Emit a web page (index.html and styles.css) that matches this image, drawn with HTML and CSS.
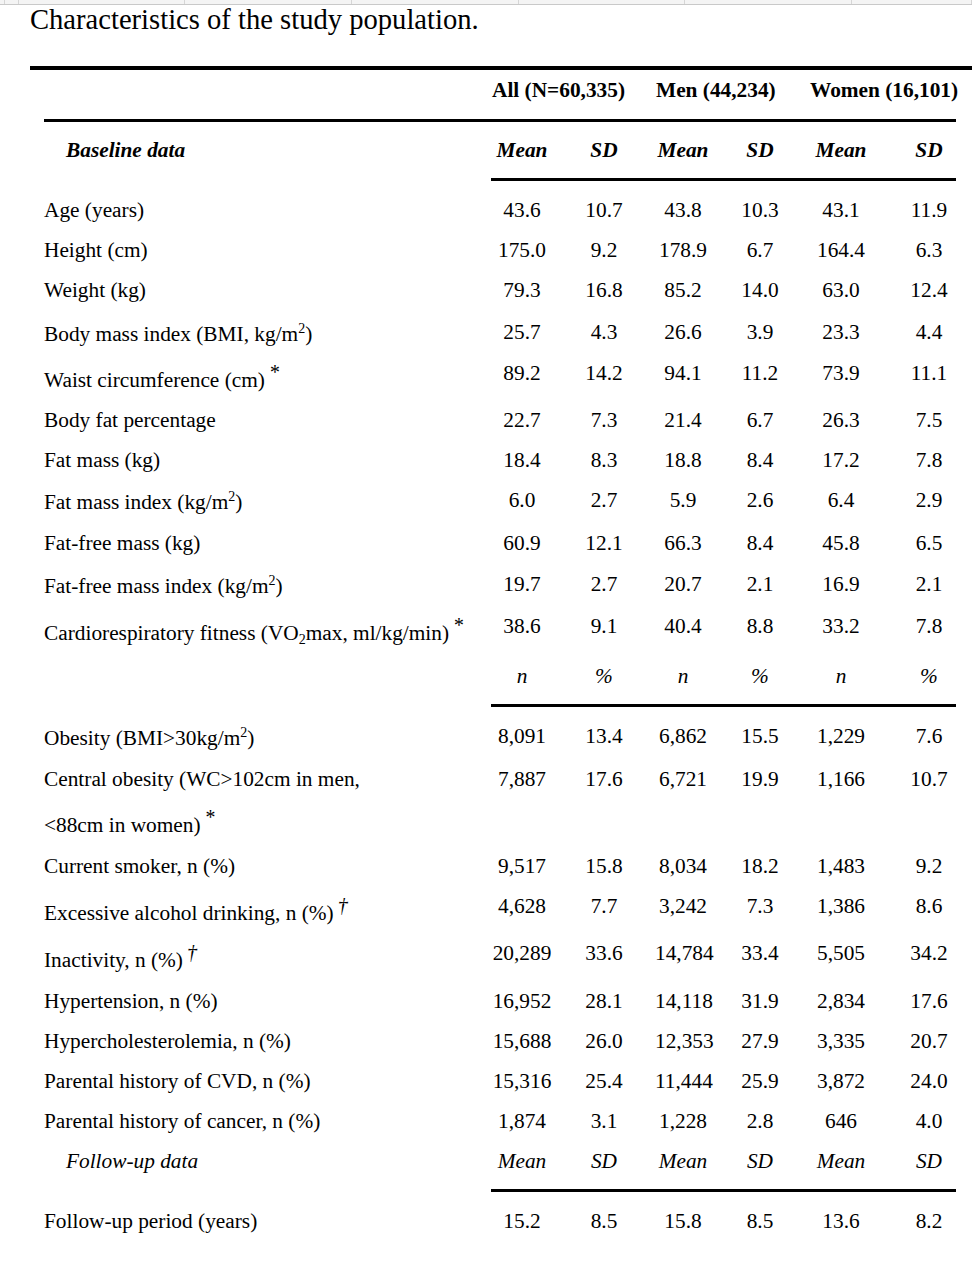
FILE: index.html
```html
<!DOCTYPE html>
<html lang="en">
<head>
<meta charset="utf-8">
<title>Characteristics of the study population</title>
<link rel="stylesheet" href="styles.css">
</head>
<body>
<div class="sheet-strip"><span></span><span></span><span></span><span></span><span></span><span></span><span></span><span></span></div>
<h1 class="caption">Characteristics of the study population.</h1>

<div class="rule rule-full"></div>

<div class="row group-head">
  <div class="label"></div>
  <div class="group">All (N=60,335)</div>
  <div class="group">Men (44,234)</div>
  <div class="group">Women (16,101)</div>
</div>
<div class="rule rule-wide"></div>

<div class="row sub-head">
  <div class="label section bold">Baseline data</div>
  <div class="v">Mean</div><div class="v">SD</div>
  <div class="v">Mean</div><div class="v">SD</div>
  <div class="v">Mean</div><div class="v">SD</div>
</div>
<div class="rule rule-vals"></div>

<div class="row">
  <div class="label">Age (years)</div>
  <div class="v">43.6</div><div class="v">10.7</div><div class="v">43.8</div><div class="v">10.3</div><div class="v">43.1</div><div class="v">11.9</div>
</div>
<div class="row">
  <div class="label">Height (cm)</div>
  <div class="v">175.0</div><div class="v">9.2</div><div class="v">178.9</div><div class="v">6.7</div><div class="v">164.4</div><div class="v">6.3</div>
</div>
<div class="row h42">
  <div class="label">Weight (kg)</div>
  <div class="v">79.3</div><div class="v">16.8</div><div class="v">85.2</div><div class="v">14.0</div><div class="v">63.0</div><div class="v">12.4</div>
</div>
<div class="row h41 sq">
  <div class="label">Body mass index (BMI, kg/m<sup>2</sup>)</div>
  <div class="v">25.7</div><div class="v">4.3</div><div class="v">26.6</div><div class="v">3.9</div><div class="v">23.3</div><div class="v">4.4</div>
</div>
<div class="row h47 noted">
  <div class="label">Waist circumference (cm)<span class="note">*</span></div>
  <div class="v">89.2</div><div class="v">14.2</div><div class="v">94.1</div><div class="v">11.2</div><div class="v">73.9</div><div class="v">11.1</div>
</div>
<div class="row">
  <div class="label">Body fat percentage</div>
  <div class="v">22.7</div><div class="v">7.3</div><div class="v">21.4</div><div class="v">6.7</div><div class="v">26.3</div><div class="v">7.5</div>
</div>
<div class="row">
  <div class="label">Fat mass (kg)</div>
  <div class="v">18.4</div><div class="v">8.3</div><div class="v">18.8</div><div class="v">8.4</div><div class="v">17.2</div><div class="v">7.8</div>
</div>
<div class="row h43 sq">
  <div class="label">Fat mass index (kg/m<sup>2</sup>)</div>
  <div class="v">6.0</div><div class="v">2.7</div><div class="v">5.9</div><div class="v">2.6</div><div class="v">6.4</div><div class="v">2.9</div>
</div>
<div class="row h41">
  <div class="label">Fat-free mass (kg)</div>
  <div class="v">60.9</div><div class="v">12.1</div><div class="v">66.3</div><div class="v">8.4</div><div class="v">45.8</div><div class="v">6.5</div>
</div>
<div class="row h42 sq">
  <div class="label">Fat-free mass index (kg/m<sup>2</sup>)</div>
  <div class="v">19.7</div><div class="v">2.7</div><div class="v">20.7</div><div class="v">2.1</div><div class="v">16.9</div><div class="v">2.1</div>
</div>
<div class="row h50 noted">
  <div class="label">Cardiorespiratory fitness (VO<sub>2</sub>max, ml/kg/min)<span class="note">*</span></div>
  <div class="v">38.6</div><div class="v">9.1</div><div class="v">40.4</div><div class="v">8.8</div><div class="v">33.2</div><div class="v">7.8</div>
</div>
<div class="row">
  <div class="label"></div>
  <div class="v it">n</div><div class="v it">%</div><div class="v it">n</div><div class="v it">%</div><div class="v it">n</div><div class="v it">%</div>
</div>
<div class="rule rule-vals"></div>

<div class="row h43 sq">
  <div class="label">Obesity (BMI&gt;30kg/m<sup>2</sup>)</div>
  <div class="v">8,091</div><div class="v">13.4</div><div class="v">6,862</div><div class="v">15.5</div><div class="v">1,229</div><div class="v">7.6</div>
</div>
<div class="row h46">
  <div class="label">Central obesity (WC&gt;102cm in men,</div>
  <div class="v">7,887</div><div class="v">17.6</div><div class="v">6,721</div><div class="v">19.9</div><div class="v">1,166</div><div class="v">10.7</div>
</div>
<div class="row h41">
  <div class="label">&lt;88cm in women)<span class="note">*</span></div>
</div>
<div class="row">
  <div class="label">Current smoker, n (%)</div>
  <div class="v">9,517</div><div class="v">15.8</div><div class="v">8,034</div><div class="v">18.2</div><div class="v">1,483</div><div class="v">9.2</div>
</div>
<div class="row h47 noted">
  <div class="label">Excessive alcohol drinking, n (%)<span class="note">†</span></div>
  <div class="v">4,628</div><div class="v">7.7</div><div class="v">3,242</div><div class="v">7.3</div><div class="v">1,386</div><div class="v">8.6</div>
</div>
<div class="row h48 noted">
  <div class="label">Inactivity, n (%)<span class="note">†</span></div>
  <div class="v">20,289</div><div class="v">33.6</div><div class="v">14,784</div><div class="v">33.4</div><div class="v">5,505</div><div class="v">34.2</div>
</div>
<div class="row">
  <div class="label">Hypertension, n (%)</div>
  <div class="v">16,952</div><div class="v">28.1</div><div class="v">14,118</div><div class="v">31.9</div><div class="v">2,834</div><div class="v">17.6</div>
</div>
<div class="row">
  <div class="label">Hypercholesterolemia, n (%)</div>
  <div class="v">15,688</div><div class="v">26.0</div><div class="v">12,353</div><div class="v">27.9</div><div class="v">3,335</div><div class="v">20.7</div>
</div>
<div class="row">
  <div class="label">Parental history of CVD, n (%)</div>
  <div class="v">15,316</div><div class="v">25.4</div><div class="v">11,444</div><div class="v">25.9</div><div class="v">3,872</div><div class="v">24.0</div>
</div>
<div class="row">
  <div class="label">Parental history of cancer, n (%)</div>
  <div class="v">1,874</div><div class="v">3.1</div><div class="v">1,228</div><div class="v">2.8</div><div class="v">646</div><div class="v">4.0</div>
</div>
<div class="row">
  <div class="label section">Follow-up data</div>
  <div class="v it">Mean</div><div class="v it">SD</div><div class="v it">Mean</div><div class="v it">SD</div><div class="v it">Mean</div><div class="v it">SD</div>
</div>
<div class="rule rule-vals"></div>

<div class="row">
  <div class="label">Follow-up period (years)</div>
  <div class="v">15.2</div><div class="v">8.5</div><div class="v">15.8</div><div class="v">8.5</div><div class="v">13.6</div><div class="v">8.2</div>
</div>
</body>
</html>
```

FILE: styles.css
```css
html, body {
  margin: 0;
  padding: 0;
  background: #ffffff;
}

body {
  font-family: "Liberation Serif", "Times New Roman", serif;
  font-size: 21.33px;
  color: #000000;
}

/* faint spreadsheet header remnant at the very top */
.sheet-strip {
  display: grid;
  grid-template-columns: 5px 14px 166px 167px 167px 166px 167px 1fr;
  height: 4px;
  background: #f4f4f4;
  border-bottom: 1px solid #c9c9c9;
}

.sheet-strip span {
  border-right: 1px solid #d6d6d6;
}

.caption {
  margin: 0 0 0 30px;
  font-size: 28.6px;
  font-weight: normal;
  line-height: 29px;
}

.rule {
  height: 3px;
  background: #000000;
}

.rule-full {
  margin: 32px 0 0 30px;
  height: 4px;
}

.rule-wide {
  margin-left: 44px;
  width: 912px;
}

.rule-vals {
  margin: 0 0 17px 491px;
  width: 465px;
}

.row {
  display: grid;
  grid-template-columns: 447px 62px 102px 56px 98px 64px 83px;
  align-items: start;
  margin-left: 44px;
  width: 912px;
  height: 40px;
  box-sizing: border-box;
  line-height: 24px;
}

.row.h41 { height: 41px; }
.row.h42 { height: 42px; }
.row.h43 { height: 43px; }
.row.h46 { height: 46px; }
.row.h47 { height: 47px; }
.row.h48 { height: 48px; }
.row.h50 { height: 50px; }

.group-head {
  height: 49px;
  padding-top: 8px;
  font-weight: bold;
}

.group {
  grid-column: span 2;
  padding-left: 1px;
  white-space: nowrap;
}

.sub-head {
  height: 56px;
  padding-top: 16px;
  font-weight: bold;
  font-style: italic;
}

.label {
  white-space: nowrap;
}

.section {
  padding-left: 22px;
  font-style: italic;
}

.bold {
  font-weight: bold;
}

.v {
  text-align: center;
  white-space: nowrap;
}

.v:last-child {
  padding-left: 29px;
}

.it {
  font-style: italic;
}

.row.noted .label {
  padding-top: 7px;
}

.row.sq .label {
  padding-top: 2px;
}

sup {
  font-size: 14px;
  line-height: 0;
  vertical-align: 8px;
}

sub {
  font-size: 14px;
  line-height: 0;
  vertical-align: -4px;
}

.note {
  display: inline-block;
  margin-left: 4px;
  font-size: 20px;
  font-style: italic;
  line-height: 0;
  vertical-align: 8px;
}
```
